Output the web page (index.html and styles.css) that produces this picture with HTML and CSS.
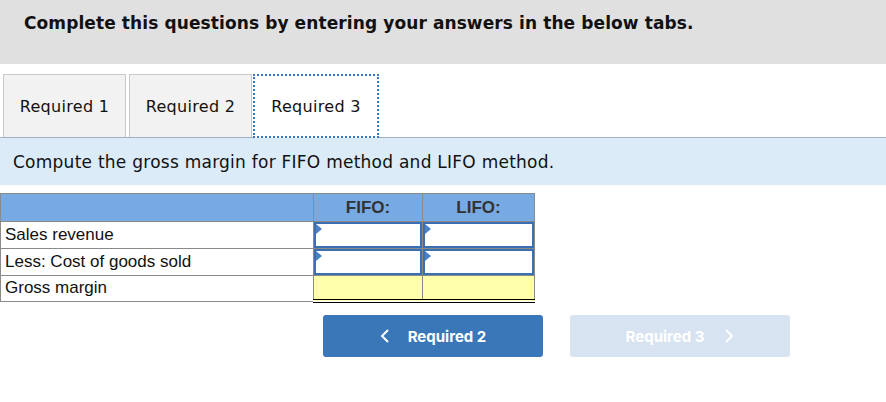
FILE: index.html
```html
<!DOCTYPE html>
<html lang="en">
<head>
    <meta charset="UTF-8">
    <meta name="viewport" content="width=device-width, initial-scale=1.0">
    <title>Gross Margin</title>
    <link rel="stylesheet" href="styles.css">
</head>
<body>
    <div class="header">Complete this questions by entering your answers in the below tabs.</div>

    <div class="tabs">
        <div class="tab">Required 1</div>
        <div class="tab">Required 2</div>
        <div class="tab active">Required 3</div>
    </div>

    <div class="question">Compute the gross margin for FIFO method and LIFO method.</div>

    <table class="grid">
        <tr class="head">
            <th class="label"></th>
            <th class="fifo">FIFO:</th>
            <th>LIFO:</th>
        </tr>
        <tr>
            <td class="label">Sales revenue</td>
            <td class="entry"><div class="box"></div></td>
            <td class="entry"><div class="box"></div></td>
        </tr>
        <tr>
            <td class="label">Less: Cost of goods sold</td>
            <td class="entry"><div class="box"></div></td>
            <td class="entry"><div class="box"></div></td>
        </tr>
        <tr class="sum">
            <td class="label">Gross margin</td>
            <td class="total"></td>
            <td class="total"></td>
        </tr>
    </table>

    <div class="nav">
        <button class="nav-btn prev">
            <svg width="10" height="16" viewBox="0 0 10 16"><path d="M8 2 L2 8 L8 14" fill="none" stroke="#fff" stroke-width="2"/></svg>
            <span>Required 2</span>
        </button>
        <button class="nav-btn next">
            <span>Required 3</span>
            <svg width="10" height="16" viewBox="0 0 10 16"><path d="M2 2 L8 8 L2 14" fill="none" stroke="#fff" stroke-width="2"/></svg>
        </button>
    </div>
</body>
</html>
```

FILE: styles.css
```css
body {
    margin: 0;
    padding: 0;
    font-family: "DejaVu Sans", Verdana, sans-serif;
    color: #111;
    background: #fff;
}
.header {
    background: #e0e0e0;
    height: 64px;
    box-sizing: border-box;
    padding: 13px 0 0 24px;
    font-size: 17px;
    font-weight: bold;
    letter-spacing: 0.1px;
}
.tabs {
    display: flex;
    gap: 3px;
    margin-top: 10px;
    padding-left: 3px;
    border-bottom: 1px solid #9fb0c2;
}
.tab {
    width: 121px;
    height: 62px;
    display: flex;
    align-items: center;
    justify-content: center;
    background: #f2f2f2;
    border: 1px solid #c9c9c9;
    border-bottom: none;
    font-size: 16px;
    letter-spacing: 0.3px;
}
.tab.active {
    width: 126px;
    background: #fff;
    border: 2px dotted #3b78c4;
    height: 64px;
    box-sizing: border-box;
    margin-bottom: -1px;
    margin-left: -2px;
}
.question {
    background: #dbebf8;
    height: 47px;
    padding-left: 13px;
    display: flex;
    align-items: center;
    font-size: 17px;
    letter-spacing: 0.25px;
}
.grid {
    border-collapse: collapse;
    margin-top: 8px;
    width: 535px;
    font-family: "Liberation Sans", Arial, sans-serif;
    font-size: 17px;
    line-height: 20px;
}
.grid th, .grid td {
    border: 1px solid #8a8a8a;
    height: 26px;
    padding: 0;
}
.grid .head th {
    height: 27px;
    background: #77aae3;
    color: #333;
    font-weight: bold;
    text-align: center;
}
.grid .label {
    width: 308px;
    text-align: left;
    padding-left: 4px;
}
.grid .fifo {
    width: 108px;
}
.grid .entry {
    position: relative;
}
.box {
    height: 22px;
    border: 2px solid #3a6fb2;
    background: #fff;
}
.entry::before {
    content: "";
    position: absolute;
    left: 2px;
    top: 2px;
    border-left: 6px solid #4a80c6;
    border-top: 5px solid transparent;
    border-bottom: 5px solid transparent;
}
.grid .sum td {
    height: 23px;
}
.grid .total {
    background: #ffffaa;
    border-top: 1px solid #000;
    border-bottom: 4px double #000;
}
.nav {
    display: flex;
    gap: 27px;
    margin: 12px 0 0 323px;
}
.nav-btn {
    width: 220px;
    height: 42px;
    border: none;
    border-radius: 3px;
    display: flex;
    align-items: center;
    justify-content: center;
    gap: 18px;
    font-family: Inter, "Liberation Sans", sans-serif;
    font-size: 15px;
    font-weight: bold;
    color: #fff;
    cursor: pointer;
}
.nav-btn.prev {
    background: #3a77b9;
}
.nav-btn.next {
    background: #d7e3f0;
    gap: 20px;
}
```
